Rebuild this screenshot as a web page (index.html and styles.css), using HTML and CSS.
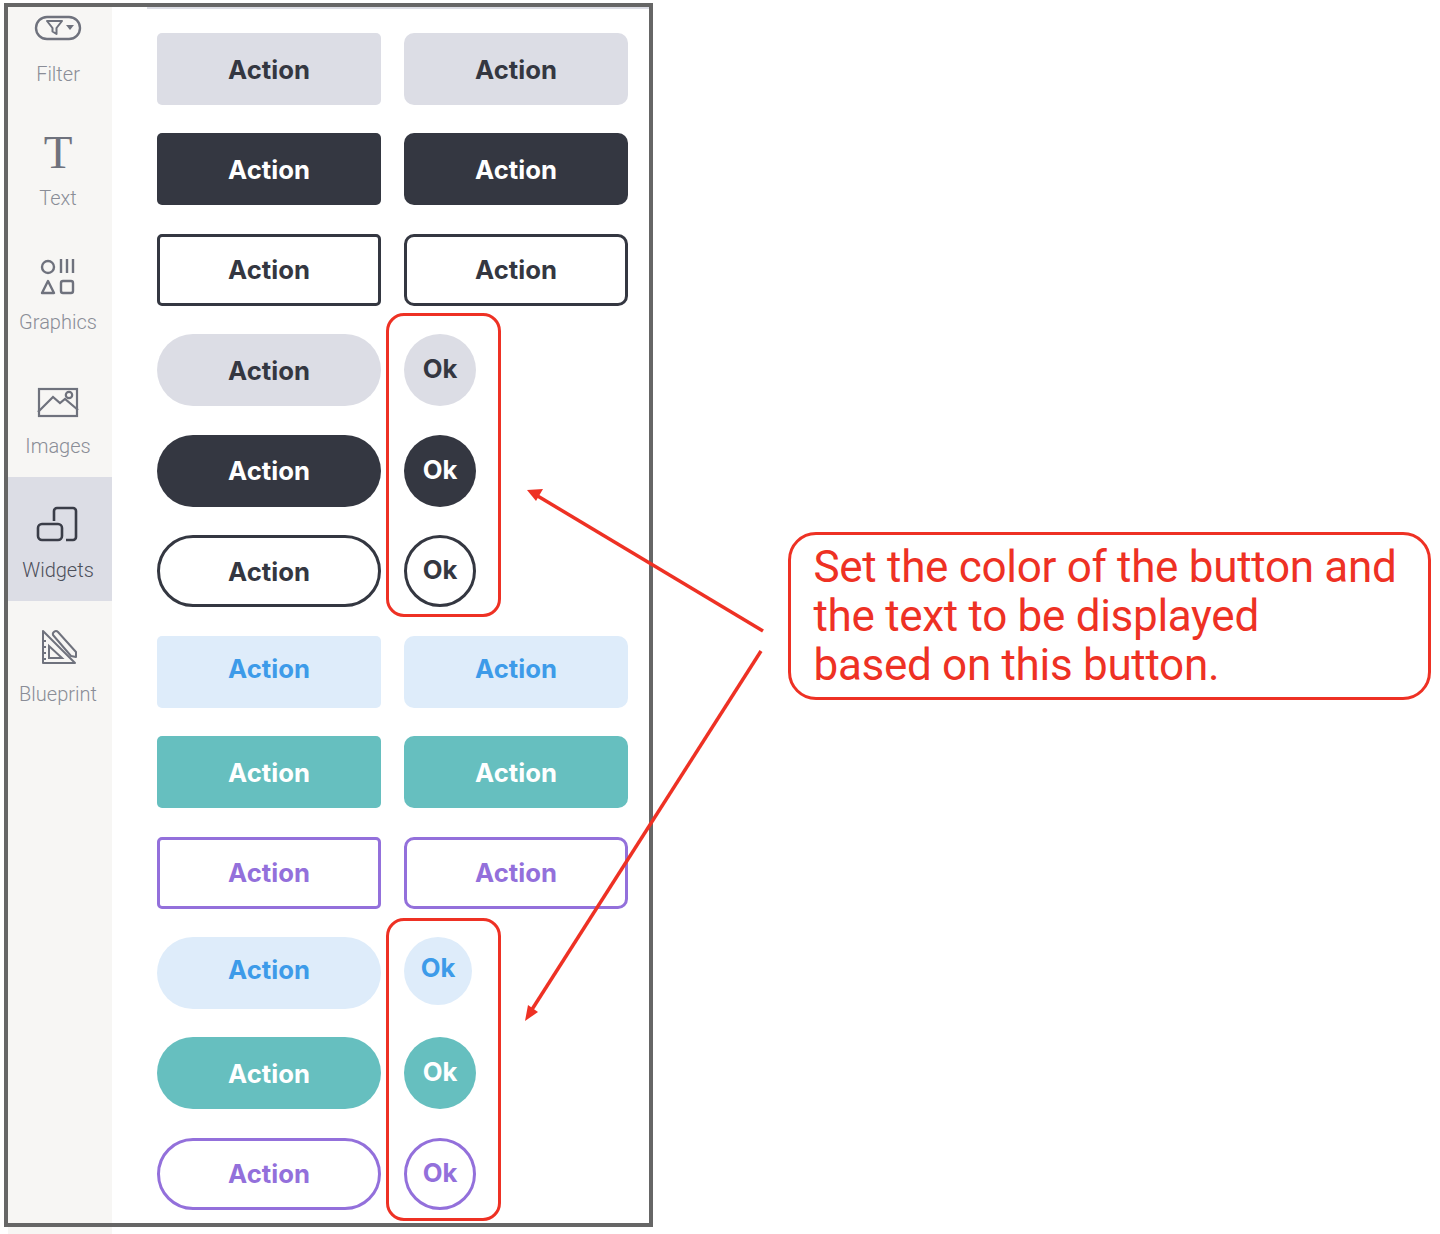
FILE: index.html
```html
<!DOCTYPE html>
<html>
<head>
<meta charset="utf-8">
<title>Button widgets</title>
<link rel="stylesheet" href="styles.css">
</head>
<body>
<div class="frame">
    <div class="sidebar">
        <div class="nav nav-first">
            <svg class="icon icon-filter" width="48" height="30" viewBox="0 0 48 30" fill="none" stroke="#6f727d" stroke-width="2.400">
                <rect x="2" y="4" width="44" height="22" rx="11"/>
                <path d="M13 8h15l-5.500 7v6l-4-2.500v-3.500z" stroke-width="2" stroke-linejoin="round"/>
                <path d="M32 12h8l-4 5z" fill="#6f727d" stroke="none"/>
            </svg>
            <span>Filter</span>
        </div>
        <div class="nav">
            <span class="glyph-t">T</span>
            <span>Text</span>
        </div>
        <div class="nav">
            <svg class="icon" width="40" height="40" viewBox="0 0 40 40" fill="none" stroke="#6f727d" stroke-width="2.400">
                <circle cx="10" cy="10" r="6"/>
                <path d="M23 2v14M29 2v14M35 2v14"/>
                <path d="M10 24l6 12H4z" stroke-linejoin="round"/>
                <rect x="23" y="24" width="12" height="12" rx="2"/>
            </svg>
            <span>Graphics</span>
        </div>
        <div class="nav">
            <svg class="icon" width="42" height="34" viewBox="0 0 42 34" fill="none" stroke="#6f727d" stroke-width="2.200">
                <rect x="2" y="2" width="38" height="27"/>
                <path d="M1 25L16 10l7 6 5-4 13 11"/>
                <circle cx="32" cy="8" r="3.200"/>
            </svg>
            <span>Images</span>
        </div>
        <div class="nav nav-active">
            <svg class="icon" width="44" height="40" viewBox="0 0 44 40" fill="none" stroke="#3a3d48" stroke-width="2.600">
                <path d="M18 16V6a3 3 0 0 1 3-3h16a3 3 0 0 1 3 3v26a3 3 0 0 1-3 3h-7"/>
                <rect x="2" y="19" width="24" height="16" rx="4"/>
            </svg>
            <span>Widgets</span>
        </div>
        <div class="nav">
            <svg class="icon" width="38" height="40" viewBox="0 0 38 40" fill="none" stroke="#6f727d" stroke-width="2">
                <path d="M4 2v32h32z" stroke-linejoin="round"/>
                <path d="M10 17v12h13z"/>
                <path d="M4 12h3M4 18h3M4 24h3M4 30h3"/>
                <path d="M14 6a3 3 0 0 1 5-3l18 20v5l-5-1z" stroke-linejoin="round"/>
            </svg>
            <span>Blueprint</span>
        </div>
    </div>
    <div class="main">
        <div class="btn grey">Action</div>
        <div class="btn grey round">Action</div>
        <div class="btn dark">Action</div>
        <div class="btn dark round">Action</div>
        <div class="btn line">Action</div>
        <div class="btn line round">Action</div>

        <div class="btn grey pill">Action</div>
        <div class="btn grey circle">Ok</div>
        <div class="btn dark pill">Action</div>
        <div class="btn dark circle">Ok</div>
        <div class="btn line pill">Action</div>
        <div class="btn line circle">Ok</div>

        <div class="btn blue">Action</div>
        <div class="btn blue round">Action</div>
        <div class="btn teal">Action</div>
        <div class="btn teal round">Action</div>
        <div class="btn purple">Action</div>
        <div class="btn purple round">Action</div>

        <div class="btn blue pill">Action</div>
        <div class="btn blue circle small">Ok</div>
        <div class="btn teal pill">Action</div>
        <div class="btn teal circle">Ok</div>
        <div class="btn purple pill">Action</div>
        <div class="btn purple circle">Ok</div>
    </div>
</div>
<div class="tail"></div>

<!-- red notes drawn over the screenshot -->
<div class="mark mark-top"></div>
<div class="mark mark-bottom"></div>
<svg class="arrows" width="1440" height="1234" viewBox="0 0 1440 1234" fill="#ee3124" stroke="none">
    <path d="M763 631L536 495" stroke="#ee3124" stroke-width="3.500" fill="none"/>
    <path d="M527 490l16-1-7 12z"/>
    <path d="M761 651L531 1011" stroke="#ee3124" stroke-width="3.500" fill="none"/>
    <path d="M525 1021l3-16 10 7z"/>
</svg>
<div class="note">Set the color of the button and<br>the text to be displayed<br>based on this button.</div>
</body>
</html>
```

FILE: styles.css
```css
html, body {
    margin: 0;
    padding: 0;
    background-color: white;
}
body {
    position: relative;
    width: 1440px;
    height: 1234px;
    overflow: hidden;
    font-family: Roboto, Arial, sans-serif;
}
.frame {
    box-sizing: border-box;
    display: flex;
    width: 649px;
    height: 1224px;
    margin: 3px 0 0 4px;
    border: 4px solid #666666;
    overflow: hidden;
}
.tail {
    width: 104px;
    height: 7px;
    margin-left: 8px;
    background-color: #f7f6f4;
}
.sidebar {
    flex: 0 0 104px;
    background-color: #f7f6f4;
}
.nav {
    box-sizing: border-box;
    display: flex;
    flex-direction: column;
    align-items: center;
    justify-content: flex-end;
    height: 124px;
    padding: 0 4px 19px 0;
    font-size: 20px;
    font-weight: 300;
    line-height: 24px;
    color: #8a8d97;
}
.nav-first {
    height: 98px;
}
.nav-active {
    background-color: #dcdde5;
    color: #4c4f5a;
}
.icon {
    display: block;
    flex: none;
    margin-bottom: 13px;
}
.icon-filter {
    margin-bottom: 19px;
}
.glyph-t {
    font-family: "Liberation Serif", serif;
    font-size: 47px;
    line-height: 48px;
    color: #6f727d;
    margin-bottom: 10px;
}
.main {
    flex: 1;
    display: grid;
    grid-template-columns: 224px 224px;
    grid-auto-rows: 72px;
    column-gap: 23px;
    row-gap: 28.45px;
    align-content: start;
    padding: 26px 0 0 45px;
    background: linear-gradient(#dcdde5, #dcdde5) no-repeat 35px 0 / 100% 2px;
}
.btn {
    box-sizing: border-box;
    display: flex;
    align-items: center;
    justify-content: center;
    border-radius: 5px;
    font-family: Inter, Arial, sans-serif;
    font-size: 25.7px;
    font-weight: 700;
}
.round {
    border-radius: 10px;
}
.pill {
    border-radius: 36px;
}
.circle {
    width: 72px;
    padding-bottom: 3px;
    border-radius: 50%;
}
.small {
    width: 68px;
    height: 68px;
    padding-bottom: 4px;
}
.grey {
    background-color: #dcdde5;
    color: #343741;
}
.dark {
    background-color: #343741;
    color: white;
}
.line {
    border: 3.5px solid #343741;
    color: #343741;
}
.blue {
    padding-bottom: 7px;
    background-color: #deecfa;
    color: #3d9be9;
}
.teal {
    background-color: #66bfbf;
    color: white;
}
.purple {
    border: 3.5px solid #9370db;
    color: #9370db;
}
.mark, .note {
    box-sizing: border-box;
    position: absolute;
    border: 3.5px solid #ee3124;
}
.mark {
    left: 386px;
    width: 115px;
    border-radius: 18px;
}
.mark-top {
    top: 313px;
    height: 304px;
}
.mark-bottom {
    top: 918px;
    height: 303px;
}
.arrows {
    position: absolute;
    left: 0;
    top: 0;
}
.note {
    left: 788px;
    top: 532px;
    width: 643px;
    height: 168px;
    padding: 7.5px 0 0 22.5px;
    border-radius: 28px;
    font-size: 44px;
    line-height: 49px;
    letter-spacing: -0.3px;
    color: #ee3124;
    white-space: nowrap;
}
```
